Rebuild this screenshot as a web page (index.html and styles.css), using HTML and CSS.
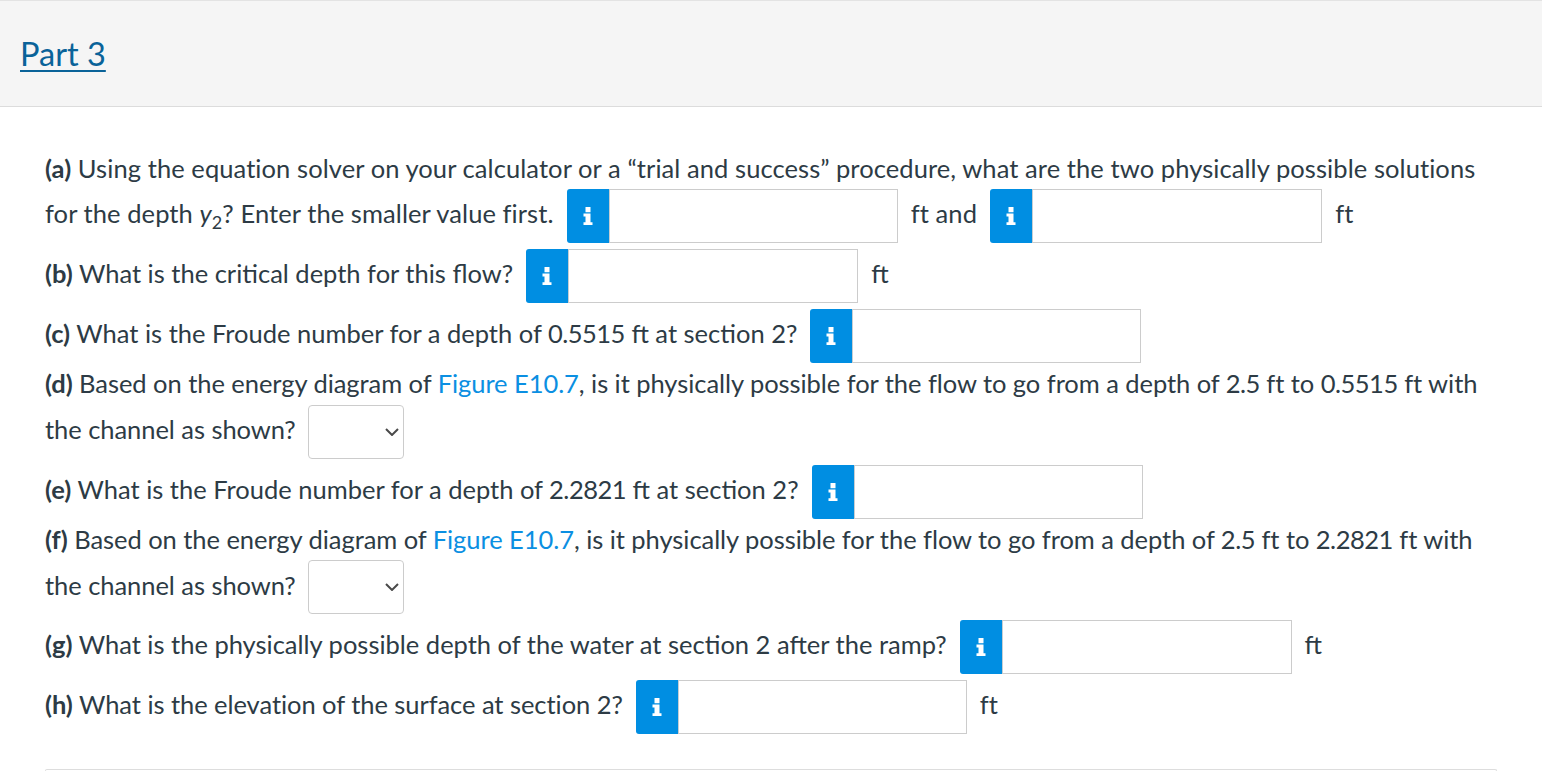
FILE: index.html
```html
<!DOCTYPE html>
<html lang="en">
<head>
<meta charset="UTF-8" />
<title>Part 3</title>
<link rel="stylesheet" href="styles.css">
</head>
<body>
<svg class="sprite" width="0" height="0">
    <symbol id="icon-info" viewBox="0 0 10 18">
        <path d="M2.5 0h5v5.2h-5zM.5 6.6h7v8.6h2V18H.5v-2.8h2V9.4h-2z" />
    </symbol>
</svg>
<header class="part-header">
    <a class="part-title" href="#">Part 3</a>
</header>
<main class="question">
    <p class="lead"><b>(a)</b> Using the equation solver on your calculator or a “trial and success” procedure, what are the two physically possible solutions for the depth <i>y</i><sub>2</sub>? Enter the smaller value first.
        <span class="answer"><span class="answer-body"><span class="info"><svg><use href="#icon-info" /></svg></span><input type="text" class="w-289" /></span></span> ft and
        <span class="answer"><span class="answer-body"><span class="info"><svg><use href="#icon-info" /></svg></span><input type="text" class="w-290" /></span></span> ft</p>
    <p><b>(b)</b> What is the critical depth for this flow?
        <span class="answer"><span class="answer-body"><span class="info"><svg><use href="#icon-info" /></svg></span><input type="text" class="w-290" /></span></span> ft</p>
    <p><b>(c)</b> What is the Froude number for a depth of <span class="num">0.5515</span> ft at section 2?
        <span class="answer"><span class="answer-body"><span class="info"><svg><use href="#icon-info" /></svg></span><input type="text" class="w-289" /></span></span></p>
    <p class="tight"><b>(d)</b> Based on the energy diagram of <a href="#">Figure E10.7</a>, is it physically possible for the flow to go from a depth of <span class="num">2.5</span> ft to <span class="num">0.5515</span> ft with the channel as shown?
        <span class="answer pick"><span class="answer-body"><select><option></option></select><svg class="chevron" viewBox="0 0 14 8"><path d="M1 1l6 6 6-6" /></svg></span></span></p>
    <p><b>(e)</b> What is the Froude number for a depth of <span class="num">2.2821</span> ft at section 2?
        <span class="answer"><span class="answer-body"><span class="info"><svg><use href="#icon-info" /></svg></span><input type="text" class="w-289" /></span></span></p>
    <p class="tight"><b>(f)</b> Based on the energy diagram of <a href="#">Figure E10.7</a>, is it physically possible for the flow to go from a depth of <span class="num">2.5</span> ft to <span class="num">2.2821</span> ft with the channel as shown?
        <span class="answer pick"><span class="answer-body"><select><option></option></select><svg class="chevron" viewBox="0 0 14 8"><path d="M1 1l6 6 6-6" /></svg></span></span></p>
    <p><b>(g)</b> What is the physically possible depth of the water at section 2 after the ramp?
        <span class="answer"><span class="answer-body"><span class="info"><svg><use href="#icon-info" /></svg></span><input type="text" class="w-290" /></span></span> ft</p>
    <p class="tight"><b>(h)</b> What is the elevation of the surface at section 2?
        <span class="answer"><span class="answer-body"><span class="info"><svg><use href="#icon-info" /></svg></span><input type="text" class="w-289" /></span></span> ft</p>
    <div class="next-box"></div>
</main>
</body>
</html>
```

FILE: styles.css
```css
html, body { height: 100%; overflow: hidden; }
body { margin: 0; background: white; color: #2d3b45; font-family: Lato, "Open Sans", sans-serif; font-size: 25.5px; line-height: 35px; }
.sprite { display: block; }

.part-header { box-sizing: border-box; height: 107px; padding: 33px 20px 0; background: #f5f5f5; border-top: 1px solid #e3e3e3; border-bottom: 1px solid #dcdcdc; }
.part-title { color: #0a6399; font-size: 32.5px; line-height: 40px; text-decoration: underline; text-decoration-thickness: 2px; text-underline-offset: 4px; }

.question { padding: 44px 55px 0 45px; }
.question p { margin: 0 0 3px; }
.question .lead { letter-spacing: .08px; }
.question .tight { letter-spacing: -.05px; }
.question a { color: #0b8fe2; text-decoration: none; }
.num { letter-spacing: -.5px; }
sub { font-size: 18px; line-height: 0; }
b { font-weight: 700; }

.answer { display: inline-block; overflow: hidden; height: 54px; margin: 3px 6.5px 0; vertical-align: -20px; }
.answer-body { position: relative; display: flex; height: 54px; }
.pick { margin-top: 3.5px; margin-left: 6px; }
.info { display: flex; flex: none; align-items: center; justify-content: center; width: 42px; background: #008ee2; border-radius: 3px 0 0 3px; }
.info svg { width: 10px; height: 18px; fill: white; }
input { box-sizing: border-box; height: 54px; padding: 0 8px; background: white; border: 1px solid #ccc; border-left: 1px solid #c7cdd1; border-radius: 0; }
.w-289 { width: 289px; }
.w-290 { width: 290px; }
select { box-sizing: border-box; width: 96px; height: 54px; background: white; border: 1px solid #ccc; border-radius: 4px; appearance: none; }
.chevron { position: absolute; top: 23px; right: 5px; width: 14px; height: 8px; fill: none; stroke: #4a4a4a; stroke-width: 2; pointer-events: none; }

.next-box { height: 1px; margin-top: 35px; margin-right: -10px; border: 1px solid #ddd; border-bottom: none; border-radius: 8px 8px 0 0; }
```
